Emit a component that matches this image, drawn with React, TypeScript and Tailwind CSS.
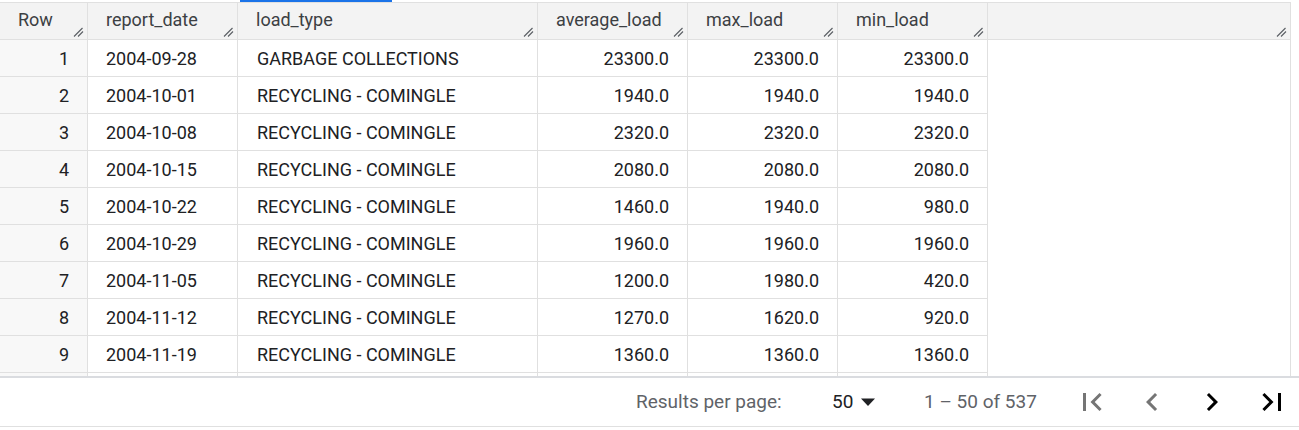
import React from "react";

const rows = [
  ["1", "2004-09-28", "GARBAGE COLLECTIONS", "23300.0", "23300.0", "23300.0"],
  ["2", "2004-10-01", "RECYCLING - COMINGLE", "1940.0", "1940.0", "1940.0"],
  ["3", "2004-10-08", "RECYCLING - COMINGLE", "2320.0", "2320.0", "2320.0"],
  ["4", "2004-10-15", "RECYCLING - COMINGLE", "2080.0", "2080.0", "2080.0"],
  ["5", "2004-10-22", "RECYCLING - COMINGLE", "1460.0", "1940.0", "980.0"],
  ["6", "2004-10-29", "RECYCLING - COMINGLE", "1960.0", "1960.0", "1960.0"],
  ["7", "2004-11-05", "RECYCLING - COMINGLE", "1200.0", "1980.0", "420.0"],
  ["8", "2004-11-12", "RECYCLING - COMINGLE", "1270.0", "1620.0", "920.0"],
  ["9", "2004-11-19", "RECYCLING - COMINGLE", "1360.0", "1360.0", "1360.0"],
];

const Grip = () => (
  <svg className="absolute right-[3px] bottom-[2px]" width="11" height="10" viewBox="0 0 11 10">
    <path d="M1 9.5L9.5 1M5 9.5L10 4.5" stroke="#5f6368" strokeWidth="1.2" fill="none" />
  </svg>
);

const HeadCell = ({ w, label }: { w: string; label?: string }) => (
  <div className={`relative ${w} shrink-0 h-full border-r border-[#e0e0e0] pl-[18px] pt-[5px] leading-[24px] text-[#3c4043]`}>
    {label}
    <Grip />
  </div>
);

const Icon = ({ d, color }: { d: string; color: string }) => (
  <svg width="36" height="36" viewBox="0 0 24 24" fill={color}>
    <path d={d} />
  </svg>
);

export default function App() {
  return (
    <div className="w-[1299px] h-[430px] bg-white overflow-hidden text-[18px]" style={{ fontFamily: "Roboto, 'Liberation Sans', sans-serif" }}>
      <div className="h-[2px] relative">
        <div className="absolute left-[240px] w-[152px] h-[2px] bg-[#1a73e8]" />
      </div>
      <div className="h-[376px] overflow-hidden border-b-2 border-[#dadce0]">
        {/* header */}
        <div className="flex h-[38px] w-[1291px] bg-[#f3f3f3] border-t border-b border-[#e0e0e0]">
          <HeadCell w="w-[88px]" label="Row" />
          <HeadCell w="w-[150px]" label="report_date" />
          <HeadCell w="w-[300px]" label="load_type" />
          <HeadCell w="w-[150px]" label="average_load" />
          <HeadCell w="w-[150px]" label="max_load" />
          <HeadCell w="w-[150px]" label="min_load" />
          <HeadCell w="w-[303px]" />
        </div>
        {rows.map((r) => (
          <div key={r[0]} className="flex h-[37px] w-[1291px] text-[#202124]">
            <div className="w-[88px] shrink-0 bg-[#f8f8f8] border-r border-b border-[#e0e0e0] pr-[18px] flex items-center justify-end">{r[0]}</div>
            <div className="w-[150px] shrink-0 border-r border-b border-[#e0e0e0] pl-[18px] flex items-center">{r[1]}</div>
            <div className="w-[300px] shrink-0 border-r border-b border-[#e0e0e0] pl-[19px] flex items-center">{r[2]}</div>
            <div className="w-[150px] shrink-0 border-r border-b border-[#e0e0e0] pr-[18px] flex items-center justify-end">{r[3]}</div>
            <div className="w-[150px] shrink-0 border-r border-b border-[#e0e0e0] pr-[18px] flex items-center justify-end">{r[4]}</div>
            <div className="w-[150px] shrink-0 border-r border-b border-[#e0e0e0] pr-[18px] flex items-center justify-end">{r[5]}</div>
            <div className="w-[303px] shrink-0 border-r border-[#e0e0e0]" />
          </div>
        ))}
        {/* partially visible next row */}
        <div className="flex h-[37px] w-[1291px]">
          <div className="w-[88px] shrink-0 bg-[#f8f8f8] border-r border-[#e0e0e0]" />
          <div className="w-[150px] shrink-0 border-r border-[#e0e0e0]" />
          <div className="w-[300px] shrink-0 border-r border-[#e0e0e0]" />
          <div className="w-[150px] shrink-0 border-r border-[#e0e0e0]" />
          <div className="w-[150px] shrink-0 border-r border-[#e0e0e0]" />
          <div className="w-[150px] shrink-0 border-r border-[#e0e0e0]" />
          <div className="w-[303px] shrink-0 border-r border-[#e0e0e0]" />
        </div>
      </div>
      {/* footer */}
      <div className="h-[49px] border-b border-[#e0e0e0] flex items-center text-[19px] text-[#5f6368]">
        <div className="ml-[636px] w-[196px] whitespace-nowrap">Results per page:</div>
        <div className="flex items-center text-[#202124] w-[92px]">
          50
          <svg className="ml-[7px]" width="16" height="10" viewBox="0 0 16 10">
            <path d="M1 1.5h14L8 9z" fill="#202124" />
          </svg>
        </div>
        <div className="w-[150px] whitespace-nowrap">1 – 50 of 537</div>
        <div className="flex items-center gap-[24px]">
          <Icon color="#757575" d="M18.41 16.59L13.82 12l4.59-4.59L17 6l-6 6 6 6zM6 6h2v12H6z" />
          <Icon color="#757575" d="M15.41 7.41L14 6l-6 6 6 6 1.41-1.41L10.83 12z" />
          <Icon color="#000000" d="M10 6L8.59 7.41 13.17 12l-4.58 4.59L10 18l6-6z" />
          <Icon color="#000000" d="M5.59 7.41L10.18 12l-4.59 4.59L7 18l6-6-6-6zM16 6h2v12h-2z" />
        </div>
      </div>
    </div>
  );
}
